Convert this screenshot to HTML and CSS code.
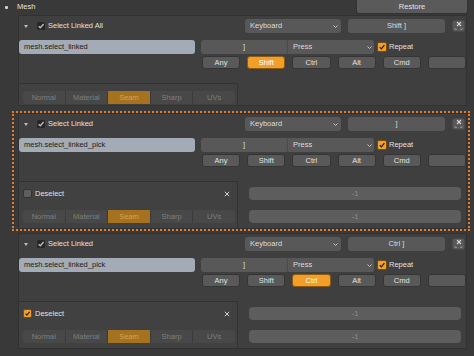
FILE: index.html
```html
<!DOCTYPE html>
<html>
<head>
<meta charset="utf-8">
<link rel="stylesheet" href="styles.css">
</head>
<body>
<div class="top">
  <span class="dot"></span>
  <span class="title">Mesh</span>
  <div class="restore">Restore</div>
</div>

<div class="item item1">
  <div class="row r1">
    <div class="head"><span class="tri"></span><span class="cb dark"><svg viewBox="0 0 8 8"><path d="M1.6 4.2 L3.3 5.8 L6.6 2" fill="none" stroke="#bdbdbd" stroke-width="1.3"/></svg></span><span>Select Linked All</span></div>
    <div class="dd w96"><span>Keyboard</span><svg class="chev" viewBox="0 0 5 3"><path d="M0.5 0.5 L2.5 2.5 L4.5 0.5" fill="none" stroke="#cfcfcf" stroke-width="0.9"/></svg></div>
    <div class="field">Shift ]</div>
    <div class="xbtn"><svg viewBox="0 0 13 12"><rect x="0.5" y="0.5" width="12" height="11" rx="2" fill="#575757"/><path d="M5 2 L9 6 M9 2 L5 6" stroke="#d6d6d6" stroke-width="1.1"/><path d="M3 9.5 H5 M8 9.5 H10 M3 8 V9.5 M10 8 V9.5" stroke="#9a9a9a" stroke-width="0.8"/></svg></div>
  </div>
  <div class="row r2">
    <div class="tf">mesh.select_linked</div>
    <div class="key">]</div>
    <div class="press"><span>Press</span><svg class="chev" viewBox="0 0 5 3"><path d="M0.5 0.5 L2.5 2.5 L4.5 0.5" fill="none" stroke="#cfcfcf" stroke-width="0.9"/></svg></div>
    <span class="cb orange"><svg viewBox="0 0 10 10"><path d="M2.2 5.2 L4.2 7.3 L8 2.6" fill="none" stroke="#2a1a05" stroke-width="1.5"/></svg></span>
    <span class="rep">Repeat</span>
  </div>
  <div class="row r3">
    <div class="mods">
      <div class="btn">Any</div>
      <div class="btn on">Shift</div>
      <div class="btn">Ctrl</div>
      <div class="btn">Alt</div>
      <div class="btn">Cmd</div>
      <div class="btn"></div>
    </div>
  </div>
  <div class="props">
    <div class="pleft short">
      <div class="enum"><span>Normal</span><span>Material</span><span class="sel">Seam</span><span>Sharp</span><span>UVs</span></div>
    </div>
  </div>
</div>

<div class="focus">
  <div class="item">
    <div class="row r1">
      <div class="head"><span class="tri"></span><span class="cb dark"><svg viewBox="0 0 8 8"><path d="M1.6 4.2 L3.3 5.8 L6.6 2" fill="none" stroke="#bdbdbd" stroke-width="1.3"/></svg></span><span>Select Linked</span></div>
      <div class="dd w96"><span>Keyboard</span><svg class="chev" viewBox="0 0 5 3"><path d="M0.5 0.5 L2.5 2.5 L4.5 0.5" fill="none" stroke="#cfcfcf" stroke-width="0.9"/></svg></div>
      <div class="field">]</div>
      <div class="xbtn"><svg viewBox="0 0 13 12"><rect x="0.5" y="0.5" width="12" height="11" rx="2" fill="#575757"/><path d="M5 2 L9 6 M9 2 L5 6" stroke="#d6d6d6" stroke-width="1.1"/><path d="M3 9.5 H5 M8 9.5 H10 M3 8 V9.5 M10 8 V9.5" stroke="#9a9a9a" stroke-width="0.8"/></svg></div>
    </div>
    <div class="row r2">
      <div class="tf">mesh.select_linked_pick</div>
      <div class="key">]</div>
      <div class="press"><span>Press</span><svg class="chev" viewBox="0 0 5 3"><path d="M0.5 0.5 L2.5 2.5 L4.5 0.5" fill="none" stroke="#cfcfcf" stroke-width="0.9"/></svg></div>
      <span class="cb orange"><svg viewBox="0 0 10 10"><path d="M2.2 5.2 L4.2 7.3 L8 2.6" fill="none" stroke="#2a1a05" stroke-width="1.5"/></svg></span>
      <span class="rep">Repeat</span>
    </div>
    <div class="row r3">
      <div class="mods">
        <div class="btn">Any</div>
        <div class="btn">Shift</div>
        <div class="btn">Ctrl</div>
        <div class="btn">Alt</div>
        <div class="btn">Cmd</div>
        <div class="btn"></div>
      </div>
    </div>
    <div class="props">
      <div class="pleft">
        <div class="prow"><span class="cb grey"></span><span class="plabel">Deselect</span><svg class="close" viewBox="0 0 6 6"><path d="M0.8 0.8 L5.2 5.2 M5.2 0.8 L0.8 5.2" stroke="#d0d0d0" stroke-width="1"/></svg></div>
        <div class="enum"><span>Normal</span><span>Material</span><span class="sel">Seam</span><span>Sharp</span><span>UVs</span></div>
      </div>
      <div class="pright">
        <div class="val">-1</div>
        <div class="val">-1</div>
      </div>
    </div>
  </div>
</div>

<div class="item item3">
  <div class="row r1">
    <div class="head"><span class="tri"></span><span class="cb dark"><svg viewBox="0 0 8 8"><path d="M1.6 4.2 L3.3 5.8 L6.6 2" fill="none" stroke="#bdbdbd" stroke-width="1.3"/></svg></span><span>Select Linked</span></div>
    <div class="dd w96"><span>Keyboard</span><svg class="chev" viewBox="0 0 5 3"><path d="M0.5 0.5 L2.5 2.5 L4.5 0.5" fill="none" stroke="#cfcfcf" stroke-width="0.9"/></svg></div>
    <div class="field">Ctrl ]</div>
    <div class="xbtn"><svg viewBox="0 0 13 12"><rect x="0.5" y="0.5" width="12" height="11" rx="2" fill="#575757"/><path d="M5 2 L9 6 M9 2 L5 6" stroke="#d6d6d6" stroke-width="1.1"/><path d="M3 9.5 H5 M8 9.5 H10 M3 8 V9.5 M10 8 V9.5" stroke="#9a9a9a" stroke-width="0.8"/></svg></div>
  </div>
  <div class="row r2">
    <div class="tf">mesh.select_linked_pick</div>
    <div class="key">]</div>
    <div class="press"><span>Press</span><svg class="chev" viewBox="0 0 5 3"><path d="M0.5 0.5 L2.5 2.5 L4.5 0.5" fill="none" stroke="#cfcfcf" stroke-width="0.9"/></svg></div>
    <span class="cb orange"><svg viewBox="0 0 10 10"><path d="M2.2 5.2 L4.2 7.3 L8 2.6" fill="none" stroke="#2a1a05" stroke-width="1.5"/></svg></span>
    <span class="rep">Repeat</span>
  </div>
  <div class="row r3">
    <div class="mods">
      <div class="btn">Any</div>
      <div class="btn">Shift</div>
      <div class="btn on">Ctrl</div>
      <div class="btn">Alt</div>
      <div class="btn">Cmd</div>
      <div class="btn"></div>
    </div>
  </div>
  <div class="props">
    <div class="pleft">
      <div class="prow"><span class="cb orange big"><svg viewBox="0 0 10 10"><path d="M2.2 5.2 L4.2 7.3 L8 2.6" fill="none" stroke="#2a1a05" stroke-width="1.5"/></svg></span><span class="plabel">Deselect</span><svg class="close" viewBox="0 0 6 6"><path d="M0.8 0.8 L5.2 5.2 M5.2 0.8 L0.8 5.2" stroke="#d0d0d0" stroke-width="1"/></svg></div>
      <div class="enum"><span>Normal</span><span>Material</span><span class="sel">Seam</span><span>Sharp</span><span>UVs</span></div>
    </div>
    <div class="pright">
      <div class="val">-1</div>
      <div class="val">-1</div>
    </div>
  </div>
</div>
</body>
</html>
```

FILE: styles.css
```css
* { box-sizing: border-box; margin: 0; padding: 0; }
html, body { width: 474px; height: 356px; overflow: hidden; }
body {
  background: #393939;
  font-family: "Liberation Sans", Arial, sans-serif;
  font-size: 7.5px;
  line-height: 1;
  color: #dedede;
}
.top { height: 14px; display: flex; align-items: center; padding-left: 5px; }
.dot { width: 3px; height: 3px; background: #d0d0d0; border-radius: 1px; margin-right: 9px; }
.title { flex: 1; color: #e2e2e2; }
.restore {
  width: 112px; height: 14px; margin-right: 6px;
  background: #5a5a5a; border: 1px solid #333; border-top: none;
  border-radius: 0 0 3px 3px;
  display: flex; align-items: center; justify-content: center; color: #e4e4e4;
}

.item {
  margin-left: 18px; width: 449px;
  background: #3f3f3f; border: 1px solid #313131;
  padding-top: 3px;
}
.item1 { margin-top: 1px; }
.item3 { margin-top: 2px; }

.focus {
  margin-top: 5px; margin-left: 12px; width: 458px;
  border: 2px dotted #e07a2c;
  padding: 0 1px 0 4px;
}
.focus .item { margin-left: 0; }

.row { display: flex; align-items: center; }
.r1 { height: 14px; }
.r2 { height: 14px; margin-top: 7px; }
.r3 { height: 13px; margin-top: 2px; padding-left: 183px; }

.head { width: 226px; display: flex; align-items: center; padding-left: 5px; color: #e0e0e0; }
.tri {
  width: 0; height: 0; margin-right: 9px;
  border-left: 2px solid transparent; border-right: 2px solid transparent;
  border-top: 3px solid #bcbcbc;
}
.cb { display: flex; align-items: center; justify-content: center; flex: none; }
.cb svg { width: 100%; height: 100%; display: block; }
.cb.dark { width: 8px; height: 8px; background: #262626; border-radius: 1.5px; margin-right: 3px; }
.cb.orange { width: 10px; height: 10px; background: #f0a12c; border: 1px solid #7a4c10; border-radius: 2px; margin-left: 3px; }
.cb.grey { width: 9px; height: 9px; background: #5e5e5e; border: 1px solid #333; border-radius: 2px; }
.cb.orange.big { width: 9px; height: 9px; margin-left: 0; }

.dd, .field, .key, .press {
  height: 14px; background: #585858; display: flex; align-items: center; color: #dcdcdc;
}
.dd { width: 96px; border-radius: 3px; padding: 0 3px 0 5px; justify-content: space-between; }
.chev { width: 5px; height: 3px; display: block; }
.field { width: 97px; margin-left: 7px; border-radius: 3px; justify-content: center; }
.xbtn { width: 13px; height: 12px; margin-left: 7px; }
.xbtn svg { width: 13px; height: 12px; display: block; }

.tf { width: 176px; height: 14px; background: #a2abb6; color: #1c1c1c; border-radius: 3px; padding-left: 5px; display: flex; align-items: center; }
.key { width: 87px; margin-left: 6px; border-radius: 3px 0 0 3px; justify-content: center; border-right: 1px solid #4a4a4a; }
.press { width: 86px; border-radius: 0 3px 3px 0; padding: 0 2px 0 5px; justify-content: space-between; }
.rep { margin-left: 2px; color: #e0e0e0; }

.mods { display: grid; grid-template-columns: repeat(6, 1fr); column-gap: 7px; width: 264px; height: 13px; }
.btn {
  background: #595959; border: 1px solid #353535; border-radius: 3px;
  display: flex; align-items: center; justify-content: center; color: #e0e0e0;
}
.btn.on { background: #f29f2a; border-color: #8c5a12; color: #fff; }

.props { display: flex; margin-top: 14px; }
.pleft {
  width: 219px; background: #414141;
  border-top: 1px solid #333; border-right: 1px solid #333;
  padding: 5px 0 5px 4px;
}
.pleft.short { padding-top: 7px; padding-bottom: 1px; }
.prow { height: 13px; display: flex; align-items: center; margin-bottom: 10px; }
.plabel { margin-left: 3px; color: #e0e0e0; }
.close { width: 6px; height: 6px; margin-left: auto; margin-right: 7px; display: block; }

.enum {
  width: 212px; height: 13px; display: grid; grid-template-columns: repeat(5, 1fr);
  background: #474747; border-radius: 3px; overflow: hidden; column-gap: 1px;
  background-color: #3b3b3b;
}
.enum span { background: #484848; display: flex; align-items: center; justify-content: center; color: #7f7f7f; }
.enum span.sel { background: #a5721f; color: #d9a250; }

.pright { flex: 1; padding: 6px 0 0 11px; }
.val {
  width: 212px; height: 13px; background: #5d5d5d; border-radius: 4px;
  display: flex; align-items: center; justify-content: center; color: #8e8e8e;
}
.val + .val { margin-top: 10px; }
```
